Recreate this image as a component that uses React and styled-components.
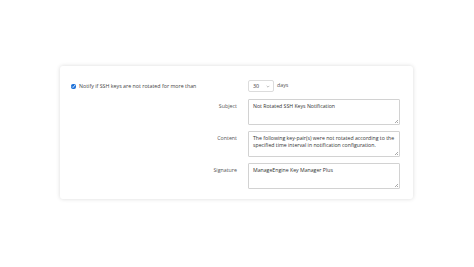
import styled, { createGlobalStyle } from 'styled-components';

const GlobalStyle = createGlobalStyle`
	html, body {
		margin: 0;
		padding: 0;
		background: #ffffff;
		font-family: 'Open Sans', 'Liberation Sans', sans-serif;
	}
`;

const rows = [
	{ label: 'Subject', value: 'Not Rotated SSH Keys Notification' },
	{
		label: 'Content',
		value:
			'The following key-pair(s) were not rotated according to the specified time interval in notification configuration.',
	},
	{ label: 'Signature', value: 'ManageEngine Key Manager Plus' },
];

const App = () => {
	return (
		<StyledPage>
			<GlobalStyle />
			<StyledCard>
				<StyledCheckLabel>
					<StyledCheckbox type='checkbox' defaultChecked />
					Notify if SSH keys are not rotated for more than
				</StyledCheckLabel>
				<StyledInline>
					<StyledSelectBox>
						<StyledSelect defaultValue='30'>
							<option value='30'>30</option>
							<option value='60'>60</option>
							<option value='90'>90</option>
						</StyledSelect>
						<StyledChevron viewBox='0 0 6 4'>
							<path d='M1 1 L3 3 L5 1' fill='none' stroke='#888' strokeWidth='0.8' />
						</StyledChevron>
					</StyledSelectBox>
					<span>days</span>
				</StyledInline>
				{rows.map((row) => (
					<StyledRow key={row.label}>
						<StyledLabel>{row.label}</StyledLabel>
						<StyledAreaBox>
							<StyledTextArea defaultValue={row.value} />
						</StyledAreaBox>
					</StyledRow>
				))}
			</StyledCard>
		</StyledPage>
	);
};

const StyledPage = styled.div`
	width: 474px;
	height: 267px;
	padding-top: 66px;
	padding-left: 60px;
	box-sizing: border-box;
`;

const StyledCard = styled.div`
	width: 353px;
	box-sizing: border-box;
	padding: 14px 13px 10px 11px;
	background: #fff;
	border-radius: 3px;
	box-shadow: 0 0 4px rgba(0, 0, 0, 0.15);
	display: grid;
	grid-template-columns: 166px 152px;
	column-gap: 11px;
	row-gap: 6px;
	font-size: 5.3px;
	color: #444;
`;

const StyledCheckLabel = styled.label`
	display: flex;
	align-items: center;
	gap: 3px;
	height: 13px;
	padding-bottom: 1px;
	box-sizing: border-box;
	color: #444;
`;

const StyledCheckbox = styled.input`
	width: 5px;
	height: 5px;
	margin: 0 0 0 0;
	accent-color: #1a6fd8;
`;

const StyledInline = styled.div`
	display: flex;
	align-items: flex-start;
	gap: 3px;
	height: 13px;
	color: #555;
	span {
		line-height: 10px;
	}
`;

const StyledSelectBox = styled.div`
	position: relative;
	width: 26px;
	height: 12px;
`;

const StyledSelect = styled.select`
	appearance: none;
	width: 26px;
	height: 12px;
	box-sizing: border-box;
	font-family: inherit;
	font-size: 5.3px;
	padding: 0 0 0 4px;
	border: 1px solid #dcdcdc;
	border-radius: 2px;
	background: #fff;
	color: #333;
	outline: none;
`;

const StyledChevron = styled.svg`
	position: absolute;
	right: 4px;
	top: 5px;
	width: 4px;
	height: 3px;
	pointer-events: none;
`;

const StyledRow = styled.div`
	display: contents;
`;

const StyledLabel = styled.div`
	text-align: right;
	padding-top: 3px;
	color: #555;
`;

const StyledAreaBox = styled.div`
	position: relative;
	width: 152px;
	height: 26px;
	&::after {
		content: '';
		position: absolute;
		right: 2px;
		bottom: 2px;
		width: 3px;
		height: 3px;
		background: linear-gradient(135deg, transparent 45%, #aaa 45%, #aaa 60%, transparent 60%, transparent 75%, #aaa 75%);
		pointer-events: none;
	}
`;

const StyledTextArea = styled.textarea`
	display: block;
	width: 152px;
	height: 26px;
	box-sizing: border-box;
	margin: 0;
	padding: 3px 2px 3px 4px;
	font-family: inherit;
	font-size: 5.2px;
	line-height: 7px;
	color: #333;
	border: 1px solid #d2d2d2;
	border-radius: 1px;
	resize: none;
	overflow: hidden;
	outline: none;
`;

export default App;
